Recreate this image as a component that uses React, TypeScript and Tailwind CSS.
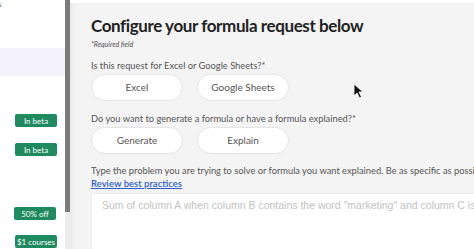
const font = { fontFamily: "Lato, 'Open Sans', sans-serif" };

function Badge({ label, className = "" }: { label: string; className?: string }) {
  return (
    <div
      className={`flex h-[13px] w-[42px] items-center justify-center rounded-[2px] bg-[#1f8a5f] text-[8px] leading-none text-white ${className}`}
    >
      {label}
    </div>
  );
}

function Choice({ label }: { label: string }) {
  return (
    <button className="flex h-[27px] w-[92px] items-center justify-center rounded-full border border-[#e4e4e4] bg-white text-[10px] text-[#555]">
      {label}
    </button>
  );
}

export default function App() {
  return (
    <div className="flex h-[249px] w-[474px] overflow-hidden bg-white" style={font}>
      {/* sidebar */}
      <aside className="flex w-[65px] shrink-0 flex-col bg-white">
        <div className="h-[48px] text-[8px] leading-[8px] text-[#666]">
          <span className="-ml-[2px]">s</span>
        </div>
        <div className="h-[28px] bg-[#f4f3fd]" />
        <Badge label="In beta" className="ml-[15px] mt-[38px]" />
        <Badge label="In beta" className="ml-[15px] mt-[16px]" />
        <Badge label="50% off" className="ml-[14px] mt-[51px]" />
        <Badge label="$1 courses" className="ml-[15px] mt-[15px]" />
      </aside>

      {/* scrollbar */}
      <div className="flex w-[5px] shrink-0 flex-col bg-[#ececec]">
        <div className="h-[212px] bg-[#7b7b7b]" />
      </div>

      {/* main panel */}
      <main className="relative flex-1 border-t-[3px] border-white bg-[#f4f4f4] pl-[21px] shadow-[inset_4px_0_4px_-2px_rgba(0,0,0,0.06)]">
        <h1 className="mt-[12px] whitespace-nowrap text-[17px] font-bold leading-[22px] tracking-[-0.4px] text-[#222]">
          Configure your formula request below
        </h1>
        <p className="mt-[3px] text-[7px] italic leading-[9px] text-[#555]">*Required field</p>

        <p className="mt-[11px] whitespace-nowrap text-[9.3px] leading-[12px] text-[#555]">
          Is this request for Excel or Google Sheets?*
        </p>
        <div className="mt-[2px] flex gap-[14px]">
          <Choice label="Excel" />
          <Choice label="Google Sheets" />
        </div>

        <p className="mt-[12px] whitespace-nowrap text-[9.3px] leading-[12px] text-[#555]">
          Do you want to generate a formula or have a formula explained?*
        </p>
        <div className="mt-[2px] flex gap-[14px]">
          <Choice label="Generate" />
          <Choice label="Explain" />
        </div>

        <p className="mt-[10px] whitespace-nowrap text-[9.3px] leading-[13px] text-[#555]">
          Type the problem you are trying to solve or formula you want explained. Be as specific as possible.
        </p>
        <a href="#" className="block text-[9.5px] font-semibold leading-[13px] text-[#2d5fc9] underline">
          Review best practices
        </a>

        <div className="mt-[3px] h-[60px] border border-[#ececec] bg-white pl-[10px] pt-[5px]">
          <p
            className="whitespace-nowrap text-[10.5px] leading-[13px] text-[#c2c2c2]"
            style={{ fontFamily: "'Liberation Sans', Arial, sans-serif" }}
          >
            Sum of column A when column B contains the word "marketing" and column C is "Q1"
          </p>
        </div>

        {/* mouse pointer */}
        <svg
          className="absolute left-[283px] top-[80px]"
          width="11"
          height="16"
          viewBox="0 0 11 16"
        >
          <path d="M1 1 L1 13 L4 10 L6.5 15 L8.5 14 L6 9 L10 9 Z" fill="#111" stroke="#fff" strokeWidth="0.8" />
        </svg>
      </main>
    </div>
  );
}
